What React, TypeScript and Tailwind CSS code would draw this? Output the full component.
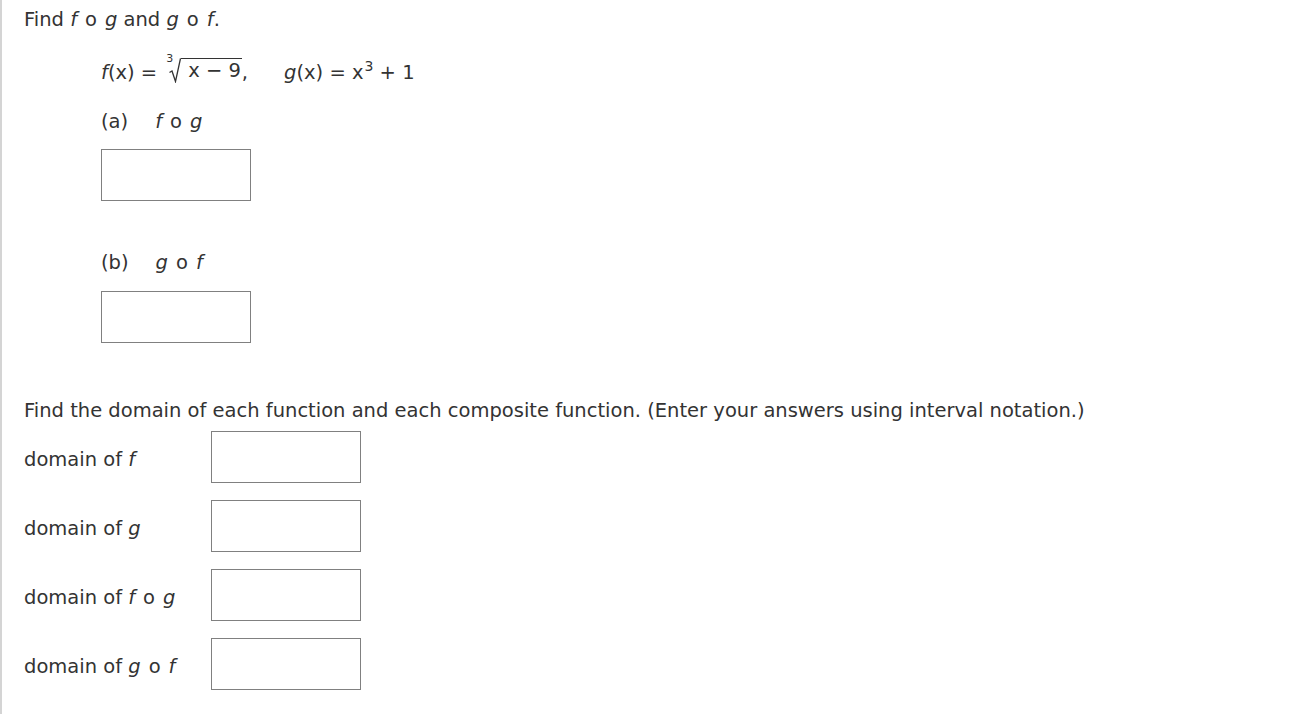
import React from 'react';

const font = { fontFamily: '"DejaVu Sans", Verdana, sans-serif' };

function Box() {
  return <div className="w-[150px] h-[52px] border border-[#808080] bg-white" />;
}

function Comp({ a, b }: { a: string; b: string }) {
  return (
    <span>
      <i>{a}</i>
      <span className="mx-[8px]">o</span>
      <i>{b}</i>
    </span>
  );
}

function CubeRoot() {
  return (
    <span className="inline-flex items-stretch relative">
      <span className="absolute left-[-3px] top-[-5px] text-[11px] leading-none">3</span>
      <svg width="12" height="25" viewBox="0 0 12 25" className="shrink-0">
        <path d="M0.5 14.5 L3 13 L6.5 23.5 L11.5 0.5" fill="none" stroke="#333" strokeWidth="1.3" />
      </svg>
      <span className="border-t border-[#333] leading-[24px] pl-[7px] pr-[1px]">x − 9</span>
    </span>
  );
}

export default function App() {
  return (
    <div className="min-h-screen bg-white border-l-2 border-[#d4d4d4] text-[#333] text-[19.5px]" style={font}>
      <div className="pl-[22px] pt-[8px]">
        {/* Part 1 */}
        <p className="leading-[24px]">
          Find <Comp a="f" b="g" /> and <Comp a="g" b="f" />.
        </p>

        <div className="pl-[77px]">
          <div className="mt-[29px] h-[24px] leading-[24px] flex items-center">
            <span>
              <i>f</i>(x) =
            </span>
            <span className="ml-[12px]">
              <CubeRoot />
            </span>
            <span>,</span>
            <span className="ml-[36px] whitespace-nowrap">
              <i>g</i>(x) = x<sup className="text-[14px] relative top-[-8px] ml-[1px]">3</sup> + 1
            </span>
          </div>

          <div className="mt-[25px] leading-[24px]">
            (a)<span className="ml-[27px]"><Comp a="f" b="g" /></span>
          </div>
          <div className="mt-[15px]">
            <Box />
          </div>

          <div className="mt-[50px] leading-[24px]">
            (b)<span className="ml-[27px]"><Comp a="g" b="f" /></span>
          </div>
          <div className="mt-[16px]">
            <Box />
          </div>
        </div>

        {/* Part 2 */}
        <p className="mt-[56px] leading-[24px] whitespace-nowrap">
          Find the domain of each function and each composite function. (Enter your answers using interval notation.)
        </p>

        <div className="mt-[8px] flex flex-col gap-[17px]">
          {[
            <>domain of <i>f</i></>,
            <>domain of <i>g</i></>,
            <>domain of <Comp a="f" b="g" /></>,
            <>domain of <Comp a="g" b="f" /></>,
          ].map((label, i) => (
            <div key={i} className="flex items-center">
              <div className="w-[187px] pt-[6px] whitespace-nowrap">{label}</div>
              <Box />
            </div>
          ))}
        </div>
      </div>
    </div>
  );
}
